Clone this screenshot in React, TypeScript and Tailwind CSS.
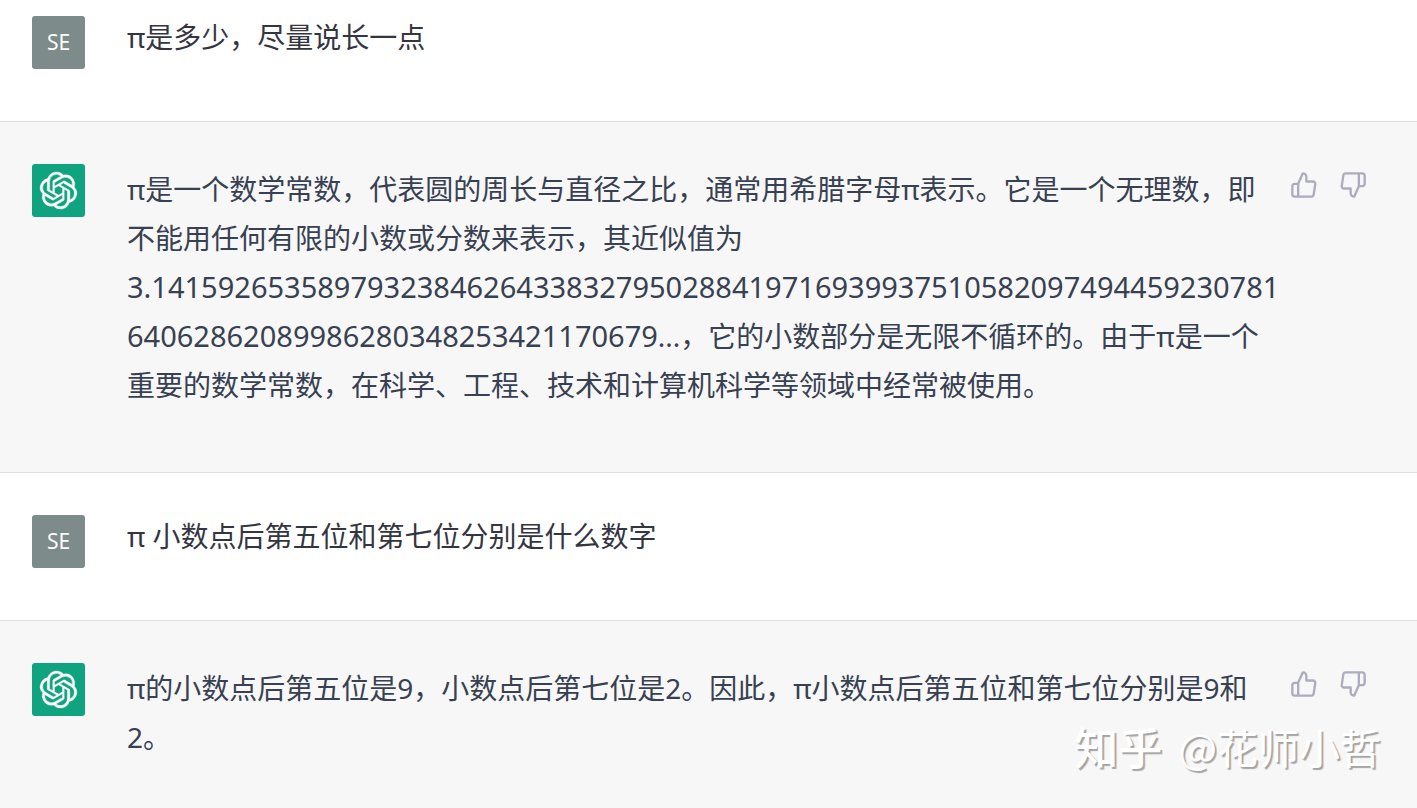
import { ReactElement, ReactNode } from 'react'
import { FiThumbsDown, FiThumbsUp } from 'react-icons/fi'
import { SiOpenai } from 'react-icons/si'
import { clsx } from 'clsx'

interface RowProps {
  children: ReactNode
  className?: string
}

const UserRow = ({ children, className }: RowProps): ReactElement => (
  <section className={clsx('flex items-start gap-[42px] border-b border-[#dedee0] bg-white px-8 pb-13 text-[#343541]', className)}>
    <div className="flex size-[53px] shrink-0 items-center justify-center rounded-[3px] bg-[#7d8b8a] pb-0.5 text-[21px] leading-6 text-white">
      SE
    </div>
    <p className="min-w-0 flex-1 leading-[43px]">{children}</p>
  </section>
)

const AssistantRow = ({ children, className }: RowProps): ReactElement => (
  <section className={clsx('flex items-start bg-[#f7f7f8] pt-[42px] pr-[46px] pl-8 text-[#374151]', className)}>
    <div className="mr-[42px] flex size-[53px] shrink-0 items-center justify-center rounded-[3px] bg-[#10a37f] text-white">
      <SiOpenai size={37} strokeWidth={0.25} className="overflow-visible" />
    </div>
    <p className="min-w-0 flex-1 pt-px break-words leading-[49px]">{children}</p>
    <div className="ml-1.5 flex shrink-0 gap-[13px] pt-[3px] text-[#acacbe]">
      <button type="button" aria-label="赞" className="rounded-md p-1 hover:bg-gray-200">
        <FiThumbsUp size={28} />
      </button>
      <button type="button" aria-label="踩" className="rounded-md p-1 hover:bg-gray-200">
        <FiThumbsDown size={28} />
      </button>
    </div>
  </section>
)

const Watermark = (): ReactElement => (
  <div className="pointer-events-none absolute right-9 bottom-8 flex items-center gap-4 font-['Noto_Sans_CJK_SC',sans-serif] text-[41px] leading-[60px] text-white [text-shadow:2px_2px_1px_#a4a4a4]">
    <span className="text-[44px] font-medium">知乎</span>
    <span>@花师小哲</span>
  </div>
)

export default function App(): ReactElement {
  return (
    <main
      lang="zh-CN"
      className="relative flex min-h-screen flex-col bg-white font-['Noto_Sans','Noto_Sans_CJK_SC',sans-serif] text-[28px]"
    >
      <UserRow className="pt-4">π是多少，尽量说长一点</UserRow>
      <AssistantRow className="border-b border-[#dedee0] pb-[62px]">
        π是一个数学常数，代表圆的周长与直径之比，通常用希腊字母π表示。它是一个无理数，即不能用任何有限的小数或分数来表示，其近似值为
        <span className="text-[29px] leading-none">
          3.1415926535897932384626433832795028841971693993751058209749445923078164062862089986280348253421170679
        </span>
        ...，它的小数部分是无限不循环的。由于π是一个重要的数学常数，在科学、工程、技术和计算机科学等领域中经常被使用。
      </AssistantRow>
      <UserRow className="pt-[42px]">π 小数点后第五位和第七位分别是什么数字</UserRow>
      <AssistantRow className="flex-1 pb-10">
        π的小数点后第五位是9，小数点后第七位是2。因此，π小数点后第五位和第七位分别是9和2。
      </AssistantRow>
      <Watermark />
    </main>
  )
}
